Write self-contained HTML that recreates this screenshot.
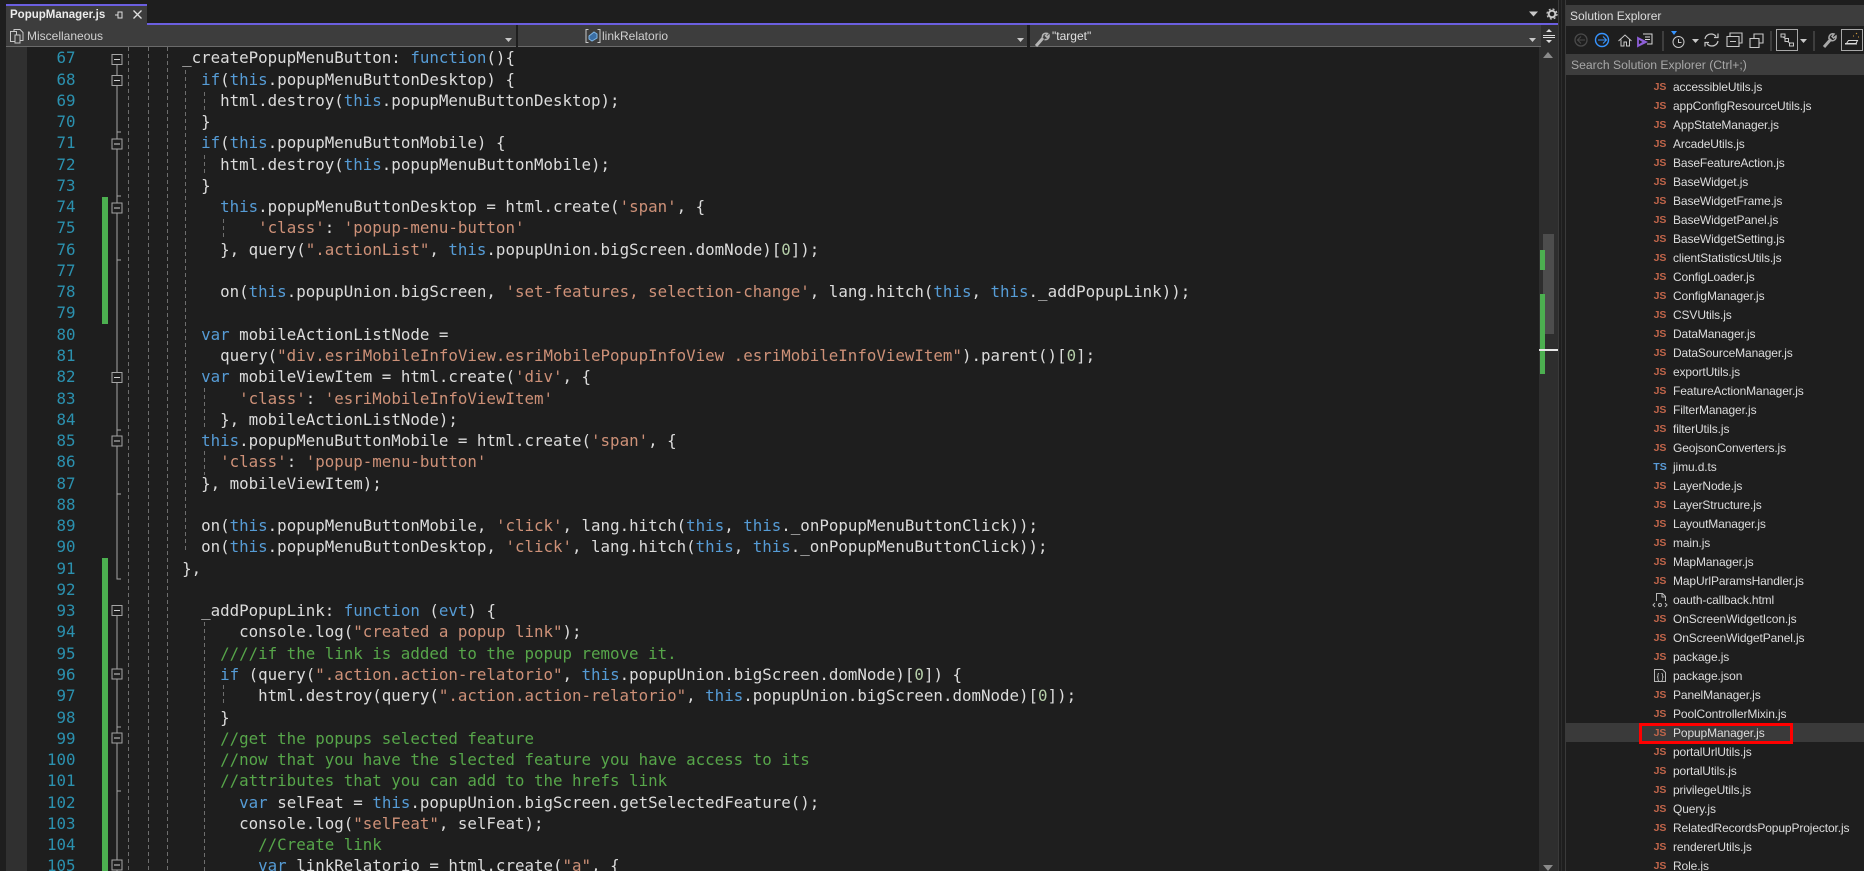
<!DOCTYPE html>
<html><head><meta charset="utf-8"><title>PopupManager.js</title>
<style>
html,body{margin:0;padding:0;background:#1e1e1e;overflow:hidden}
#r{position:relative;width:1864px;height:871px;overflow:hidden;background:#1e1e1e;font-family:"Liberation Sans",sans-serif;color:#dcdcdc}
.a{position:absolute}
pre{margin:0;position:absolute;font-family:"DejaVu Sans Mono","Liberation Mono",monospace;font-size:15.8px;line-height:21.26px;white-space:pre}
#code{left:125px;top:47.3px;color:#dcdcdc}
#nums{left:27px;top:47.3px;width:48.5px;text-align:right;color:#2b91af}
i{font-style:normal}
.k{color:#569cd6}.s{color:#ce9178}.c{color:#57a64a}.n{color:#b5cea8}
.t{position:absolute;font-size:12px;line-height:16px;white-space:nowrap}
#files{position:absolute;left:1673px;top:77.5px;font-size:12px;letter-spacing:-.12px;line-height:19px;color:#dcdcdc;white-space:pre}
#icons{position:absolute;left:1650px;top:77.5px;width:20px;font-size:10.5px;line-height:19px;font-weight:bold;text-align:center;color:#c0654a;white-space:pre}
</style></head><body><div id="r">
<!-- left margin -->
<div class="a" style="left:6px;top:47px;width:21px;height:824px;background:#303030"></div>
<!-- tab -->
<div class="a" style="left:6px;top:4px;width:141px;height:21px;background:#3d3d3d;border-top:2px solid #6b5fe0;box-sizing:border-box"></div>
<div class="t" style="left:10px;top:7px;font-weight:bold;font-size:11.5px;color:#ececec">PopupManager.js</div>
<svg class="a" style="left:110px;top:8px" width="34" height="14" fill="none" stroke="#e0e0e0"><path d="M5 7h3M8 3.500v7M8 4h4v6h-4M12 7h0"/><path d="M23.500 2.500l8 8M31.500 2.500l-8 8" stroke-width="1.300"/></svg>
<div class="a" style="left:147px;top:23px;width:1411px;height:2px;background:#6b5fe0"></div>
<svg class="a" style="left:1529px;top:8px" width="30" height="14" fill="#c8c8c8"><path d="M0 3.500h9l-4.500 5z"/><circle cx="23" cy="6" r="3.300" fill="none" stroke="#c8c8c8" stroke-width="2"/><circle cx="23" cy="6" r="5" fill="none" stroke="#c8c8c8" stroke-width="1.200" stroke-dasharray="2 2"/></svg>
<!-- nav bar -->
<div class="a" style="left:6px;top:25px;width:510px;height:21px;background:#3d3d3d;border-bottom:1px solid #6a6a6a"></div>
<div class="a" style="left:518px;top:25px;width:509px;height:21px;background:#3d3d3d;border-bottom:1px solid #6a6a6a"></div>
<div class="a" style="left:1030px;top:25px;width:511px;height:21px;background:#3d3d3d;border-bottom:1px solid #6a6a6a"></div>
<div class="a" style="left:1541px;top:25px;width:17px;height:22px;background:#2e2e2e"></div>
<div class="t" style="left:27px;top:28px;color:#d0d0d0">Miscellaneous</div>
<div class="t" style="left:602px;top:28px;color:#d0d0d0">linkRelatorio</div>
<div class="t" style="left:1052px;top:28px;color:#e0e0e0">"target"</div>
<svg class="a" style="left:9px;top:28px" width="16" height="17" fill="none" stroke="#c8c8c8"><path d="M1.500 3.500h6v10h-6zM5 3.500v-2h6l3 3v8h-6"/><path d="M6 7h5v8h-5z" fill="#3d3d3d"/></svg>
<svg class="a" style="left:585px;top:28px" width="16" height="16" fill="none"><path d="M3.500 1.500h-2.500v13h2.500M12.500 1.500h2.500v13h-2.500" stroke="#c8c8c8"/><path d="M4 8l5-4 3 2v4l-5 3-3-2z" fill="#3a6ea5" stroke="#7fb6e6"/></svg>
<svg class="a" style="left:1034px;top:32px;margin-top:-1px" width="16" height="18" fill="none" stroke="#b5b5b5"><path d="M2 15l7-8" stroke-width="3"/><path d="M8.500 6.500c-.5-3 2-5 5-4l-2 2.200 1.500 1.500 2-2c.5 3-2 5-4.500 4.300" stroke-width="1.500"/></svg>
<svg class="a" style="left:504px;top:39px;margin-top:-1px" width="10" height="6" fill="#c8c8c8"><path d="M1 0h7l-3.500 4z"/></svg>
<svg class="a" style="left:1016px;top:39px;margin-top:-1px" width="10" height="6" fill="#c8c8c8"><path d="M1 0h7l-3.500 4z"/></svg>
<svg class="a" style="left:1528px;top:39px;margin-top:-1px" width="10" height="6" fill="#c8c8c8"><path d="M1 0h7l-3.500 4z"/></svg>
<svg class="a" style="left:1541px;top:28px" width="16" height="16" fill="#dcdcdc"><path d="M2 7h12v1H2zM2 9h12v1H2zM8 1l3 3H5zM8 15l3-3H5z"/></svg>
<!-- gutter -->
<svg class="a" style="left:0;top:0" width="240" height="871">
<g fill="#4caf50"><rect x="102" y="197" width="6" height="127"/><rect x="102" y="558" width="6" height="313"/></g>
<g stroke="#6e6e6e" stroke-dasharray="4 3" fill="none">
<path d="M128.500 47V871M148.500 47V871M167.500 47V871"/>
<path d="M185.500 70V550"/>
<path d="M204.500 92V112M204.500 155V175M204.500 388V430M204.500 451V475M204.500 622V871"/>
<path d="M223.500 219V239M223.500 685V705"/>
</g>
<g stroke="#a5a5a5" fill="none">
<path d="M117 64V579H121M117 615V871M117 132H121M117 196H121M117 260H121M117 430H121M117 494H121M117 727H121M117 791H121"/>
<g fill="#1e1e1e">
<rect x="112" y="54.500" width="10" height="10"/><rect x="112" y="75.500" width="10" height="10"/><rect x="112" y="139" width="10" height="10"/><rect x="112" y="203" width="10" height="10"/><rect x="112" y="372.500" width="10" height="10"/><rect x="112" y="436" width="10" height="10"/><rect x="112" y="605.500" width="10" height="10"/><rect x="112" y="669" width="10" height="10"/><rect x="112" y="733" width="10" height="10"/><rect x="112" y="860" width="10" height="10"/>
</g>
<path stroke="#d0d0d0" d="M114 59.500h6M114 80.500h6M114 144h6M114 208h6M114 377.500h6M114 441h6M114 610.500h6M114 674h6M114 738h6M114 865h6"/>
</g>
</svg>
<pre id="nums">67
68
69
70
71
72
73
74
75
76
77
78
79
80
81
82
83
84
85
86
87
88
89
90
91
92
93
94
95
96
97
98
99
100
101
102
103
104
105</pre>
<pre id="code">      _createPopupMenuButton: <i class="k">function</i>(){
        <i class="k">if</i>(<i class="k">this</i>.popupMenuButtonDesktop) {
          html.destroy(<i class="k">this</i>.popupMenuButtonDesktop);
        }
        <i class="k">if</i>(<i class="k">this</i>.popupMenuButtonMobile) {
          html.destroy(<i class="k">this</i>.popupMenuButtonMobile);
        }
          <i class="k">this</i>.popupMenuButtonDesktop = html.create(<i class="s">'span'</i>, {
              <i class="s">'class'</i>: <i class="s">'popup-menu-button'</i>
          }, query(<i class="s">".actionList"</i>, <i class="k">this</i>.popupUnion.bigScreen.domNode)[<i class="n">0</i>]);

          on(<i class="k">this</i>.popupUnion.bigScreen, <i class="s">'set-features, selection-change'</i>, lang.hitch(<i class="k">this</i>, <i class="k">this</i>._addPopupLink));

        <i class="k">var</i> mobileActionListNode =
          query(<i class="s">"div.esriMobileInfoView.esriMobilePopupInfoView .esriMobileInfoViewItem"</i>).parent()[<i class="n">0</i>];
        <i class="k">var</i> mobileViewItem = html.create(<i class="s">'div'</i>, {
            <i class="s">'class'</i>: <i class="s">'esriMobileInfoViewItem'</i>
          }, mobileActionListNode);
        <i class="k">this</i>.popupMenuButtonMobile = html.create(<i class="s">'span'</i>, {
          <i class="s">'class'</i>: <i class="s">'popup-menu-button'</i>
        }, mobileViewItem);

        on(<i class="k">this</i>.popupMenuButtonMobile, <i class="s">'click'</i>, lang.hitch(<i class="k">this</i>, <i class="k">this</i>._onPopupMenuButtonClick));
        on(<i class="k">this</i>.popupMenuButtonDesktop, <i class="s">'click'</i>, lang.hitch(<i class="k">this</i>, <i class="k">this</i>._onPopupMenuButtonClick));
      },

        _addPopupLink: <i class="k">function</i> (<i class="k">evt</i>) {
            console.log(<i class="s">"created a popup link"</i>);
          <i class="c">////if the link is added to the popup remove it.</i>
          <i class="k">if</i> (query(<i class="s">".action.action-relatorio"</i>, <i class="k">this</i>.popupUnion.bigScreen.domNode)[<i class="n">0</i>]) {
              html.destroy(query(<i class="s">".action.action-relatorio"</i>, <i class="k">this</i>.popupUnion.bigScreen.domNode)[<i class="n">0</i>]);
          }
          <i class="c">//get the popups selected feature</i>
          <i class="c">//now that you have the slected feature you have access to its</i>
          <i class="c">//attributes that you can add to the hrefs link</i>
            <i class="k">var</i> selFeat = <i class="k">this</i>.popupUnion.bigScreen.getSelectedFeature();
            console.log(<i class="s">"selFeat"</i>, selFeat);
              <i class="c">//Create link</i>
              <i class="k">var</i> linkRelatorio = html.create(<i class="s">"a"</i>, {</pre>
<!-- scrollbar -->
<div class="a" style="left:1539px;top:47px;width:19px;height:824px;background:#2e2e2e"></div>
<div class="a" style="left:1543px;top:234px;width:11px;height:100px;background:#4d4d4d"></div>
<div class="a" style="left:1540px;top:250px;width:5px;height:20px;background:#4caf50"></div>
<div class="a" style="left:1540px;top:294px;width:5px;height:80px;background:#4caf50"></div>
<div class="a" style="left:1539px;top:349px;width:19px;height:2px;background:#e6e6e6"></div>
<svg class="a" style="left:1543px;top:52px" width="10" height="6" fill="#8a8a8a"><path d="M0 6h10L5 0z"/></svg>
<svg class="a" style="left:1543px;top:865px" width="10" height="6" fill="#8a8a8a"><path d="M0 0h10L5 6z"/></svg>
<div class="a" style="left:1558px;top:0;width:1px;height:871px;background:#3a3a3a"></div>
<div class="a" style="left:1561px;top:0;width:1px;height:871px;background:#2c2c2c"></div>
<div class="a" style="left:1565px;top:0;width:1px;height:871px;background:#3a3a3a"></div>
<!-- solution explorer -->
<div class="a" style="left:1566px;top:5px;width:298px;height:21px;background:#3d3d3d"></div>
<div class="t" style="left:1570px;top:8px;color:#dcdcdc">Solution Explorer</div>
<div class="a" style="left:1566px;top:54px;width:298px;height:21px;background:#3d3d3d"></div>
<div class="t" style="left:1571px;top:57px;font-size:12.2px;color:#a8a8a8">Search Solution Explorer (Ctrl+;)</div>
<svg class="a" style="left:1566px;top:26px" width="298" height="28" fill="none" stroke="#c8c8c8">
<circle cx="15" cy="14" r="6" stroke="#4a4a4a" stroke-width="1.300"/><path d="M11 14h8M15 10.500l-3.500 3.500 3.500 3.500" stroke="#4a4a4a"/>
<circle cx="36" cy="14" r="6.500" stroke="#3794ff" stroke-width="1.400"/><path d="M32 14h8M37 10.500l3.500 3.500-3.500 3.500" stroke="#3794ff"/>
<path d="M52.500 15l6.500-6 6.500 6M55 13.500v6.500h3v-4h2.500v4h3v-6.500"/>
<path d="M72 12l6 4-6 4zM72 12l8 4-8 4" stroke="#8e5fd8" stroke-width="1.800"/><path d="M77 8h9v10h-5" stroke="#d8d8d8"/><path d="M79 11h5M79 13.500h5" stroke="#d8d8d8"/>
<path d="M97 5v20" stroke="#3e3e3e" stroke-width="2"/>
<path d="M105 5h6l-3 4z" fill="#3794ff" stroke="none"/><circle cx="112.500" cy="16" r="5.500"/><path d="M112.500 13v3.500h3"/>
<path d="M126 13h7l-3.500 4z" fill="#c8c8c8" stroke="none"/>
<path d="M139 13c.5-3 3-5 6-5 2 0 4 1 5 2.500M152 7.500v4h-4M152 15c-.5 3-3 5-6 5-2 0-4-1-5-2.500M139 20.500v-4h4" stroke-width="1.200"/>
<path d="M161 10.500h12v10h-12zM164 10v-3h12v10h-3M164 15.500h6" stroke-width="1.100"/>
<path d="M184 12.500h9v9h-9zM188 12v-4h9v9h-4" stroke-width="1.100"/>
<path d="M205 5v20" stroke="#3e3e3e" stroke-width="2"/>
<rect x="210.500" y="3.500" width="21" height="21" stroke="#a8a8a8"/><path d="M215 8h4v3h-4zM219 12.500h3.500v3h-3.500zM223.500 17h4v3h-4zM217 11l3 2M221.500 15.500l3 2" stroke-width="1"/>
<path d="M234 13h7l-3.500 4z" fill="#c8c8c8" stroke="none"/>
<path d="M248 5v20" stroke="#3e3e3e" stroke-width="2"/>
<path d="M258 21l7-8" stroke="#a8a8a8" stroke-width="3"/><path d="M263 13c-.5-3 1.500-6 5-5l-2 2.500 1.500 1.500 2.500-2c.5 3-2 5.500-5 4.500" stroke="#a8a8a8" stroke-width="1.500"/>
<rect x="275.500" y="3.500" width="21" height="21" stroke="#a8a8a8"/><path d="M279 17.500h11l1.500-3h-9l-2 3zM279 18h12" stroke="#d8d8d8"/><path d="M287 10h1M290 8l1-1M292 11h1" stroke="#d8a040"/>
</svg>
<!-- selection -->
<div class="a" style="left:1566px;top:723px;width:298px;height:19px;background:#3a3a3a"></div>
<div id="icons">JS
JS
JS
JS
JS
JS
JS
JS
JS
JS
JS
JS
JS
JS
JS
JS
JS
JS
JS
JS
<i style="color:#5a9bd8">TS</i>
JS
JS
JS
JS
JS
JS

JS
JS
JS

JS
JS
JS
JS
JS
JS
JS
JS
JS
JS</div>
<div id="files">accessibleUtils.js
appConfigResourceUtils.js
AppStateManager.js
ArcadeUtils.js
BaseFeatureAction.js
BaseWidget.js
BaseWidgetFrame.js
BaseWidgetPanel.js
BaseWidgetSetting.js
clientStatisticsUtils.js
ConfigLoader.js
ConfigManager.js
CSVUtils.js
DataManager.js
DataSourceManager.js
exportUtils.js
FeatureActionManager.js
FilterManager.js
filterUtils.js
GeojsonConverters.js
jimu.d.ts
LayerNode.js
LayerStructure.js
LayoutManager.js
main.js
MapManager.js
MapUrlParamsHandler.js
oauth-callback.html
OnScreenWidgetIcon.js
OnScreenWidgetPanel.js
package.js
package.json
PanelManager.js
PoolControllerMixin.js
PopupManager.js
portalUrlUtils.js
portalUtils.js
privilegeUtils.js
Query.js
RelatedRecordsPopupProjector.js
rendererUtils.js
Role.js</div>
<svg class="a" style="left:1652px;top:592px" width="16" height="17" fill="none" stroke="#b8b8b8"><path d="M4.500 9V1.500h6l3 3V9M10 1.500v3.500h3.500"/><path d="M3 11l-2 2 2 2M13 11l2 2-2 2"/><circle cx="8" cy="13" r="1.500"/></svg>
<svg class="a" style="left:1653px;top:668px" width="14" height="15" fill="none" stroke="#b8b8b8"><path d="M1.500 1.500h8l3 3v9h-11z"/><path d="M6 5.500c-1 0-1 .5-1 2s-1 1.500-1 1.500 1 0 1 1.500 0 2 1 2M8.500 5.500c1 0 1 .5 1 2s1 1.500 1 1.500-1 0-1 1.500 0 2-1 2" stroke-width=".9"/></svg>
<div class="a" style="left:1639px;top:723px;width:154px;height:21px;border:3px solid #f00;box-sizing:border-box"></div>
</div></body></html>
